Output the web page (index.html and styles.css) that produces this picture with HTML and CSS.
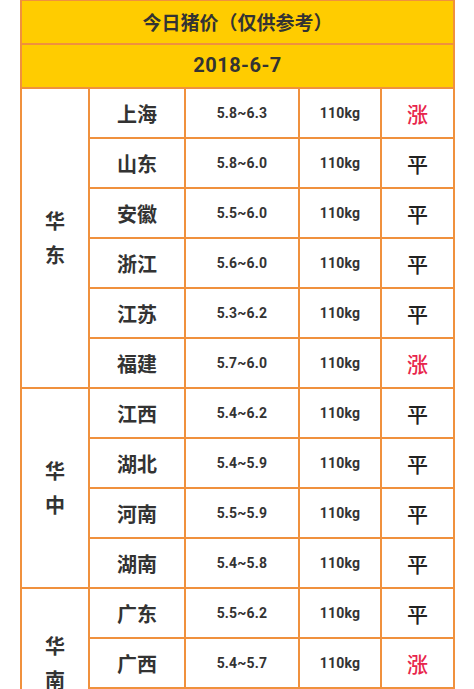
FILE: index.html
```html
<!DOCTYPE html>
<html lang="zh">
<head>
<meta charset="utf-8">
<link rel="stylesheet" href="styles.css">
</head>
<body>
<div class="wrap">
<table class="price">
  <colgroup>
    <col class="c-region"><col class="c-prov"><col class="c-price"><col class="c-weight"><col class="c-trend">
  </colgroup>
  <tr class="head title"><td colspan="5">今日猪价（仅供参考）</td></tr>
  <tr class="head date"><td colspan="5">2018-6-7</td></tr>
  <tr><td class="region" rowspan="6">华<br>东</td><td class="prov">上海</td><td class="num">5.8~6.3</td><td class="num">110kg</td><td class="trend up">涨</td></tr>
  <tr><td class="prov">山东</td><td class="num">5.8~6.0</td><td class="num">110kg</td><td class="trend">平</td></tr>
  <tr><td class="prov">安徽</td><td class="num">5.5~6.0</td><td class="num">110kg</td><td class="trend">平</td></tr>
  <tr><td class="prov">浙江</td><td class="num">5.6~6.0</td><td class="num">110kg</td><td class="trend">平</td></tr>
  <tr><td class="prov">江苏</td><td class="num">5.3~6.2</td><td class="num">110kg</td><td class="trend">平</td></tr>
  <tr><td class="prov">福建</td><td class="num">5.7~6.0</td><td class="num">110kg</td><td class="trend up">涨</td></tr>
  <tr><td class="region" rowspan="4">华<br>中</td><td class="prov">江西</td><td class="num">5.4~6.2</td><td class="num">110kg</td><td class="trend">平</td></tr>
  <tr><td class="prov">湖北</td><td class="num">5.4~5.9</td><td class="num">110kg</td><td class="trend">平</td></tr>
  <tr><td class="prov">河南</td><td class="num">5.5~5.9</td><td class="num">110kg</td><td class="trend">平</td></tr>
  <tr><td class="prov">湖南</td><td class="num">5.4~5.8</td><td class="num">110kg</td><td class="trend">平</td></tr>
  <tr><td class="region" rowspan="3">华<br>南</td><td class="prov">广东</td><td class="num">5.5~6.2</td><td class="num">110kg</td><td class="trend">平</td></tr>
  <tr><td class="prov">广西</td><td class="num">5.4~5.7</td><td class="num">110kg</td><td class="trend up">涨</td></tr>
  <tr><td class="prov">海南</td><td class="num">5.6~6.0</td><td class="num">110kg</td><td class="trend">平</td></tr>
</table>
</div>
</body>
</html>
```
FILE: styles.css
```css
html, body {
  margin: 0;
  padding: 0;
  background: #ffffff;
}
body {
  font-family: Roboto, "Noto Sans CJK SC", sans-serif;
  color: #333333;
  height: 689px;
  overflow: hidden;
}
.wrap {
  padding: 0 20px 0 20px;
}
.price {
  width: 433px;
  border-collapse: collapse;
  table-layout: fixed;
  margin-top: -1px;
}
.c-region { width: 68px; }
.c-prov { width: 96px; }
.c-price { width: 114px; }
.c-weight { width: 82px; }
.c-trend { width: 73px; }
.price td {
  border: 2px solid #f0913d;
  text-align: center;
  vertical-align: middle;
  padding: 0;
}
.head td {
  background: #ffcc00;
  color: #333333;
  font-weight: 700;
}
.title td { height: 40px; padding-bottom: 2px; font-size: 19px; }
.date td { height: 40px; padding-bottom: 2px; font-size: 20px; letter-spacing: 0.5px; }
.prov, .num, .trend { height: 48px; }
.prov {
  font-family: "Noto Sans CJK SC", sans-serif;
  font-size: 20px;
  font-weight: 700;
  color: #333333;
}
.num {
  font-size: 14px;
  font-weight: 700;
  color: #333333;
  letter-spacing: 0.2px;
}
.trend {
  font-family: "Noto Sans CJK SC", sans-serif;
  font-size: 21px;
  font-weight: 500;
  color: #222222;
}
.trend.up { color: #e8264c; }
.region {
  font-family: "Noto Sans CJK SC", sans-serif;
  font-size: 20px;
  font-weight: 700;
  line-height: 34px;
  color: #333333;
}
```
